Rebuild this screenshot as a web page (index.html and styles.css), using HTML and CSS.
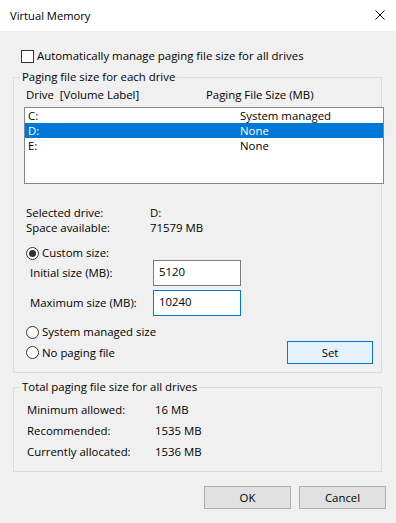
FILE: index.html
```html
<!DOCTYPE html>
<html lang="en">
<head>
<meta charset="utf-8">
<title>Virtual Memory</title>
<link rel="stylesheet" href="styles.css">
</head>
<body>
<div class="window">
  <div class="titlebar">
    <span class="title">Virtual Memory</span>
    <svg class="close" width="10" height="10" viewBox="0 0 10 10"><path d="M0.5 0.5L9.5 9.5M9.5 0.5L0.5 9.5" stroke="#000" stroke-width="1" fill="none"/></svg>
  </div>
  <div class="content">
    <div class="check-row"><span class="checkbox"></span><span>Automatically manage paging file size for all drives</span></div>

    <fieldset class="group group-drives">
      <legend>Paging file size for each drive</legend>
      <div class="list-header"><span class="hdr-drive">Drive&nbsp; [Volume Label]</span><span>Paging File Size (MB)</span></div>
      <div class="list">
        <div class="list-row"><span class="cell-drive">C:</span><span>System managed</span></div>
        <div class="list-row selected"><span class="cell-drive">D:</span><span>None</span></div>
        <div class="list-row"><span class="cell-drive">E:</span><span>None</span></div>
      </div>
      <div class="info">
        <span>Selected drive:</span><span>D:</span>
        <span>Space available:</span><span>71579 MB</span>
      </div>
      <div class="radio-row custom"><span class="radio checked"></span><span>Custom size:</span></div>
      <div class="field-row"><span class="field-label">Initial size (MB):</span><div class="input">5120</div></div>
      <div class="field-row second"><span class="field-label">Maximum size (MB):</span><div class="input focused">10240</div></div>
      <div class="radio-row system"><span class="radio"></span><span>System managed size</span></div>
      <div class="set-row">
        <div class="radio-row"><span class="radio"></span><span>No paging file</span></div>
        <div class="btn set">Set</div>
      </div>
    </fieldset>

    <fieldset class="group group-total">
      <legend>Total paging file size for all drives</legend>
      <div class="totals">
        <span>Minimum allowed:</span><span>16 MB</span>
        <span>Recommended:</span><span>1535 MB</span>
        <span>Currently allocated:</span><span>1536 MB</span>
      </div>
    </fieldset>

    <div class="buttons">
      <div class="btn">OK</div>
      <div class="btn">Cancel</div>
    </div>
  </div>
</div>
</body>
</html>
```
FILE: styles.css
```css
html, body {
  margin: 0;
  padding: 0;
}
body {
  background: #f0f0f0;
  font-family: "Open Sans", "Noto Sans", sans-serif;
  font-size: 11.4px;
  color: #000;
  width: 396px;
  height: 523px;
  overflow: hidden;
}
.window {
  display: flex;
  flex-direction: column;
}
.titlebar {
  height: 31px;
  background: #fff;
  display: flex;
  align-items: center;
  justify-content: space-between;
  padding: 0 11px 0 10px;
  box-sizing: border-box;
}
.title {
  line-height: 16px;
  font-size: 11.2px;
}
.close {
  display: block;
  margin-top: -1px;
}
.content {
  display: flex;
  flex-direction: column;
}
.check-row {
  display: flex;
  align-items: center;
  gap: 3px;
  margin: 17px 0 0 21px;
  line-height: 16px;
}
.checkbox {
  width: 13px;
  height: 13px;
  box-sizing: border-box;
  border: 1px solid #333;
  background: #fff;
}
.group {
  margin: 0 14px 0 13px;
  border: 1px solid #dcdcdc;
  padding: 0 0 0 10px;
  min-width: 0;
}
.group legend {
  line-height: 16px;
  padding: 0 2px;
  margin-left: -4px;
}
.group-drives {
  margin-top: 5px;
  padding-top: 2px;
  padding-bottom: 8px;
}
.list-header {
  display: flex;
  line-height: 16px;
  padding-left: 2px;
}
.hdr-drive {
  width: 180px;
}
.list {
  margin-top: 4px;
  margin-right: -3px;
  height: 77px;
  box-sizing: border-box;
  border: 1px solid #828790;
  background: #fff;
}
.list-row {
  display: flex;
  height: 15px;
  line-height: 15px;
  padding-left: 3px;
}
.list-row.selected {
  background: #0078d7;
  color: #fff;
}
.cell-drive {
  width: 212px;
}
.info {
  display: grid;
  grid-template-columns: 124px auto;
  grid-auto-rows: 15px;
  line-height: 15px;
  margin-top: 21px;
  padding-left: 2px;
}
.radio-row {
  display: flex;
  align-items: center;
  gap: 3px;
  padding-left: 2px;
  line-height: 16px;
}
.radio {
  width: 13px;
  height: 13px;
  box-sizing: border-box;
  border: 1px solid #333;
  border-radius: 50%;
  background: #fff;
  display: flex;
  align-items: center;
  justify-content: center;
}
.radio.checked::after {
  content: "";
  width: 7px;
  height: 7px;
  border-radius: 50%;
  background: #333;
}
.radio-row.custom {
  margin-top: 11px;
  line-height: 14px;
}
.field-row {
  display: flex;
  align-items: center;
  padding-left: 6px;
}
.field-row.second {
  margin-top: 4px;
}
.field-label {
  width: 123px;
  line-height: 16px;
}
.input {
  width: 88px;
  height: 26px;
  box-sizing: border-box;
  border: 1px solid #7a7a7a;
  background: #fff;
  padding: 2px 0 0 5px;
  line-height: 18px;
}
.input.focused {
  border-color: #0078d7;
}
.radio-row.system {
  margin-top: 8px;
}
.set-row {
  display: flex;
  align-items: center;
  justify-content: space-between;
  margin-top: 1px;
}
.btn {
  width: 87px;
  height: 23px;
  box-sizing: border-box;
  border: 1px solid #adadad;
  background: #e1e1e1;
  display: flex;
  align-items: center;
  justify-content: center;
  line-height: 16px;
}
.btn.set {
  width: 86px;
  margin-right: 8px;
  border-color: #0078d7;
  background: #e5f1fb;
}
.group-total {
  margin-top: 6px;
  padding-top: 4px;
  padding-bottom: 9px;
}
.totals {
  display: grid;
  grid-template-columns: 128px auto;
  grid-auto-rows: 21px;
  line-height: 21px;
  padding-left: 3px;
}
.buttons {
  display: flex;
  justify-content: flex-end;
  gap: 8px;
  margin: 14px 10px 0 0;
}
```
